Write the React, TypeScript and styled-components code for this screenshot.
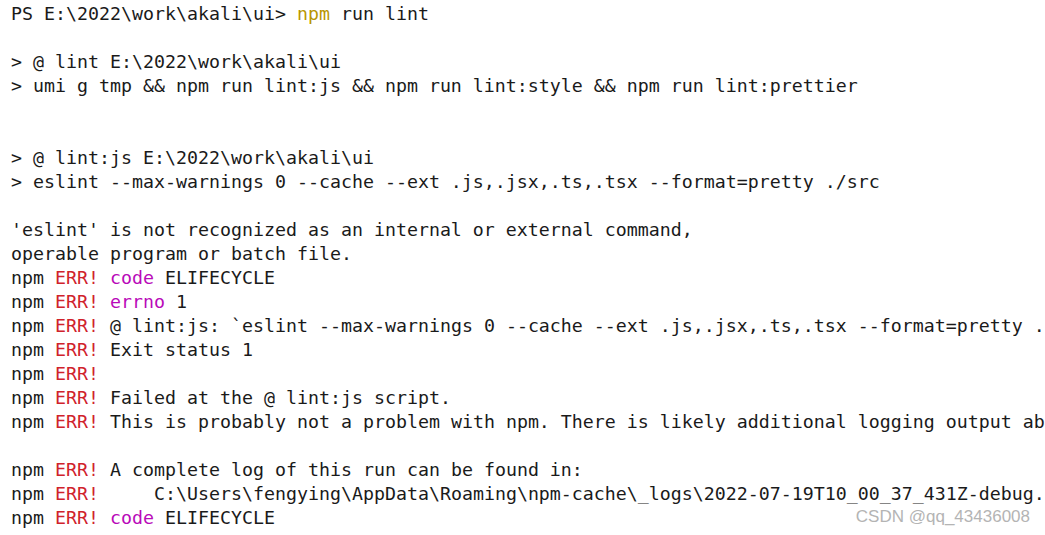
import React from "react";
import styled, { createGlobalStyle } from "styled-components";

const Global = createGlobalStyle`
  html, body { margin: 0; padding: 0; background: #ffffff; overflow: hidden; }
  body { width: 1045px; height: 535px; }
`;

const Screen = styled.div`
  position: relative;
  width: 1045px;
  height: 535px;
  overflow: hidden;
  background: #ffffff;
`;

const Terminal = styled.pre`
  margin: 0;
  padding: 2px 0 0 11px;
  font-family: "DejaVu Sans Mono", "Liberation Mono", monospace;
  font-size: 18.27px;
  line-height: 24px;
  color: #1a1a1a;
  white-space: pre;
  display: flex;
  flex-direction: column;
`;

const Line = styled.div`
  height: 24px;
  white-space: pre;
`;

type Tone = "yellow" | "red" | "magenta";
const toneColor: Record<Tone, string> = {
  yellow: "#b89600",
  red: "#d0222b",
  magenta: "#b90ab9",
};

const Span = styled.span<{ $tone: Tone }>`
  color: ${(p) => toneColor[p.$tone]};
`;

const Watermark = styled.div`
  position: absolute;
  right: 15px;
  top: 507px;
  font-family: "Liberation Sans", Arial, sans-serif;
  font-size: 17px;
  line-height: 20px;
  color: #b4b4b4;
`;

const Err = () => (
  <>
    npm <Span $tone="red">ERR!</Span>
  </>
);

export default function App() {
  return (
    <Screen>
      <Global />
      <Terminal>
        <Line>
          PS E:\2022\work\akali\ui&gt; <Span $tone="yellow">npm</Span> run lint
        </Line>
        <Line> </Line>
        <Line>&gt; @ lint E:\2022\work\akali\ui</Line>
        <Line>&gt; umi g tmp &amp;&amp; npm run lint:js &amp;&amp; npm run lint:style &amp;&amp; npm run lint:prettier</Line>
        <Line> </Line>
        <Line> </Line>
        <Line>&gt; @ lint:js E:\2022\work\akali\ui</Line>
        <Line>&gt; eslint --max-warnings 0 --cache --ext .js,.jsx,.ts,.tsx --format=pretty ./src</Line>
        <Line> </Line>
        <Line>'eslint' is not recognized as an internal or external command,</Line>
        <Line>operable program or batch file.</Line>
        <Line>
          <Err /> <Span $tone="magenta">code</Span> ELIFECYCLE
        </Line>
        <Line>
          <Err /> <Span $tone="magenta">errno</Span> 1
        </Line>
        <Line>
          <Err /> @ lint:js: `eslint --max-warnings 0 --cache --ext .js,.jsx,.ts,.tsx --format=pretty ./src`
        </Line>
        <Line>
          <Err /> Exit status 1
        </Line>
        <Line>
          <Err />
        </Line>
        <Line>
          <Err /> Failed at the @ lint:js script.
        </Line>
        <Line>
          <Err /> This is probably not a problem with npm. There is likely additional logging output above.
        </Line>
        <Line> </Line>
        <Line>
          <Err /> A complete log of this run can be found in:
        </Line>
        <Line>
          <Err />     C:\Users\fengying\AppData\Roaming\npm-cache\_logs\2022-07-19T10_00_37_431Z-debug.log
        </Line>
        <Line>
          <Err /> <Span $tone="magenta">code</Span> ELIFECYCLE
        </Line>
        <Line>
          <Err /> <Span $tone="magenta">errno</Span> 1
        </Line>
      </Terminal>
      <Watermark>CSDN @qq_43436008</Watermark>
    </Screen>
  );
}
